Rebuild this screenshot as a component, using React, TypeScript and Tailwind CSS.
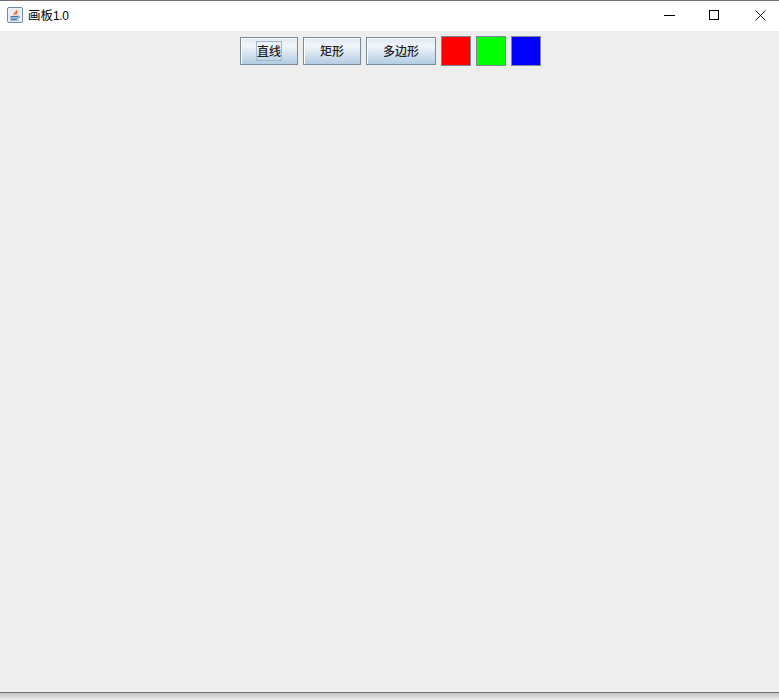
function JavaIcon() {
  return (
    <svg width="16" height="16" viewBox="0 0 16 16" className="block">
      <rect x="0.5" y="0.5" width="15" height="15" rx="1.5" fill="#f4f7fa" stroke="#6d8ba6" />
      <rect x="1.5" y="1.5" width="13" height="13" fill="#e6edf4" />
      <path d="M9.5 2C10.5 3.8 7 5 6.6 6.8c-.2.9.3 1.5 1 2C7.3 7.4 9 6.6 10 5.4c.6-.9.4-2.2-.5-3.4Z" fill="#ea7a22" />
      <path d="M10.8 4.6C10.2 5.8 9 6.6 9.2 8.2" stroke="#e2561a" strokeWidth="0.9" fill="none" />
      <path d="M3.5 9.5h7.5M3 11h8M4 12.5h6" stroke="#3f78ad" strokeWidth="1" fill="none" />
      <path d="M11 9c1.8-.3 2.2 1.4.2 2.2" stroke="#3f78ad" strokeWidth="0.9" fill="none" />
      <path d="M3 13.7h9" stroke="#86a6c4" strokeWidth="0.8" fill="none" />
    </svg>
  );
}

const btn =
  "h-[28px] flex items-center justify-center border border-[#7a8a99] shadow-[inset_1px_1px_0_#ffffff] bg-gradient-to-b from-[#dde8f3] via-[#f1f5f9] via-[30%] to-[#b4cce3] text-[12px] font-medium leading-none text-[#222222]";

export default function App() {
  return (
    <div
      className="w-[779px] h-[700px] flex flex-col bg-[#d9d9d9] overflow-hidden"
      style={{ fontFamily: '"Noto Sans CJK SC", "Liberation Sans", sans-serif' }}
    >
      <div className="h-[692px] flex flex-col bg-[#eeeeee]">
        <div className="h-[31px] shrink-0 flex items-start bg-white border-t border-[#6f6f6f]">
          <div className="ml-[7px] mt-[6px]">
            <JavaIcon />
          </div>
          <span className="ml-[5px] mt-[9px] text-[12.5px] leading-none text-black" style={{ fontFamily: '"Liberation Sans", "Noto Sans CJK SC", sans-serif' }}>
            画板<span className="text-[12px] tracking-[-0.4px]">1.0</span>
          </span>
          <div className="ml-auto h-[28px] pr-[13px] flex items-center">
            <svg width="11" height="11" viewBox="0 0 11 11"><path d="M0 5.5h11" stroke="#000" strokeWidth="1" /></svg>
            <svg className="ml-[34px]" width="10" height="11" viewBox="0 0 10 11"><rect x="0.5" y="0.5" width="9" height="9" fill="none" stroke="#000" strokeWidth="1" /></svg>
            <svg className="ml-[36px]" width="11" height="11" viewBox="0 0 11 11"><path d="M0.5 0.5l10 10M10.5 0.5l-10 10" stroke="#000" strokeWidth="0.9" fill="none" /></svg>
          </div>
        </div>
        <div className="flex-1 flex justify-center items-start gap-[5px] pt-[5px] pl-[2px]">
          <div className="h-[30px] flex items-center">
            <button className={`${btn} w-[58px]`}>
              <span className="w-[26px] h-[20px] flex items-center justify-center border border-[#a3b8cc]">直线</span>
            </button>
          </div>
          <div className="h-[30px] flex items-center">
            <button className={`${btn} w-[58px]`}>矩形</button>
          </div>
          <div className="h-[30px] flex items-center">
            <button className={`${btn} w-[70px]`}>多边形</button>
          </div>
          <button className="w-[30px] h-[30px] bg-[#ff0000] border border-[#7a8a99]" />
          <button className="w-[30px] h-[30px] bg-[#00ff00] border border-[#7a8a99]" />
          <button className="w-[30px] h-[30px] bg-[#0000ff] border border-[#7a8a99]" />
        </div>
      </div>
      <div className="h-px bg-[#6e6e6e]" />
      <div className="flex-1 bg-gradient-to-b from-[#c4c4c4] to-[#efefef]" />
    </div>
  );
}
